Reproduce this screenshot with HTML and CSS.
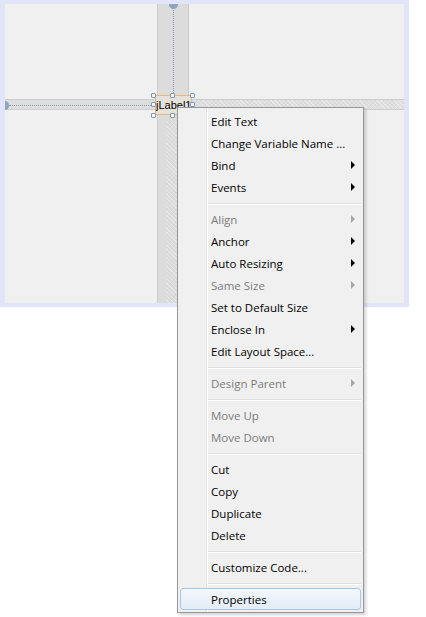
FILE: index.html
```html
<!DOCTYPE html>
<html>
<head>
<meta charset="utf-8">
<link rel="stylesheet" href="styles.css">
</head>
<body>
<div class="stage">
  <div class="frame">
    <div class="canvas">
      <div class="vband">
        <div class="vhatch"></div>
      </div>
      <div class="hband">
        <div class="hhatch"></div>
      </div>
      <div class="vdots"></div>
      <div class="hdots"></div>
      <div class="knob-top"></div>
      <div class="knob-left"></div>
      <div class="label">jLabel1</div>
    </div>
  </div>
  <div class="handle h1"></div>
  <div class="handle h2"></div>
  <div class="handle h3"></div>
  <div class="handle h4"></div>
  <div class="handle h5"></div>
  <div class="handle h6"></div>
  <div class="handle h7"></div>
  <div class="handle h8"></div>

  <div class="menu">
    <div class="item">Edit Text</div>
    <div class="item">Change Variable Name ...</div>
    <div class="item sub">Bind<span class="arrow"></span></div>
    <div class="item sub">Events<span class="arrow"></span></div>
    <div class="sep"></div>
    <div class="item sub dis">Align<span class="arrow"></span></div>
    <div class="item sub">Anchor<span class="arrow"></span></div>
    <div class="item sub">Auto Resizing<span class="arrow"></span></div>
    <div class="item sub dis">Same Size<span class="arrow"></span></div>
    <div class="item">Set to Default Size</div>
    <div class="item sub">Enclose In<span class="arrow"></span></div>
    <div class="item">Edit Layout Space...</div>
    <div class="sep"></div>
    <div class="item sub dis">Design Parent<span class="arrow"></span></div>
    <div class="sep"></div>
    <div class="item dis">Move Up</div>
    <div class="item dis">Move Down</div>
    <div class="sep"></div>
    <div class="item">Cut</div>
    <div class="item">Copy</div>
    <div class="item">Duplicate</div>
    <div class="item">Delete</div>
    <div class="sep"></div>
    <div class="item">Customize Code...</div>
    <div class="sep"></div>
    <div class="item hot">Properties</div>
  </div>
</div>
</body>
</html>
```

FILE: styles.css
```css
html, body {
  margin: 0;
  padding: 0;
  background: #ffffff;
}

.stage {
  position: relative;
  width: 426px;
  height: 617px;
  overflow: hidden;
}

.frame {
  width: 399px;
  height: 299px;
  padding: 4px 5px 4px 5px;
  background: #e2e5f9;
}

.canvas {
  position: relative;
  width: 399px;
  height: 299px;
  background: #f0f0f0;
  overflow: hidden;
}

.vband {
  position: absolute;
  left: 152px;
  top: 0;
  width: 30px;
  height: 299px;
  background: #dcdcdc;
  border-left: 1px solid #cacaca;
  border-right: 1px solid #cacaca;
}

.vhatch {
  position: absolute;
  left: 8px;
  right: 0;
  top: 118px;
  bottom: 0;
  background:
    repeating-linear-gradient(45deg, rgba(255,255,255,0) 0 2px, rgba(255,255,255,0.3) 2px 3px),
    repeating-linear-gradient(-45deg, rgba(0,0,0,0) 0 2px, rgba(0,0,0,0.025) 2px 3px);
}

.hband {
  position: absolute;
  left: 0;
  top: 95px;
  width: 399px;
  height: 9px;
  background: #dedede;
  border-top: 1px solid #cccccc;
  border-bottom: 1px solid #cccccc;
}

.hhatch {
  position: absolute;
  left: 186px;
  right: 0;
  top: 0;
  bottom: 0;
  background:
    repeating-linear-gradient(45deg, rgba(255,255,255,0) 0 2px, rgba(255,255,255,0.3) 2px 3px),
    repeating-linear-gradient(-45deg, rgba(0,0,0,0) 0 2px, rgba(0,0,0,0.025) 2px 3px);
}

.vdots {
  position: absolute;
  left: 168px;
  top: 4px;
  height: 87px;
  border-left: 1px dotted #8398ae;
}

.hdots {
  position: absolute;
  left: 4px;
  top: 101px;
  width: 142px;
  border-top: 1px dotted #8398ae;
}

.knob-top {
  position: absolute;
  left: 164px;
  top: -4px;
  width: 9px;
  height: 9px;
  border-radius: 50%;
  background: #8ea5bd;
}

.knob-left {
  position: absolute;
  left: -4px;
  top: 97px;
  width: 8px;
  height: 9px;
  border-radius: 50%;
  background: #8ea5bd;
}

.label {
  position: absolute;
  left: 150px;
  top: 91px;
  width: 35px;
  height: 18px;
  border: 1px solid #eab87a;
  background: #e6e2da;
  font-family: "Liberation Sans", Arial, sans-serif;
  font-size: 11px;
  line-height: 19px;
  color: #000000;
  white-space: nowrap;
  overflow: visible;
}

.handle {
  position: absolute;
  width: 3px;
  height: 3px;
  border: 1px solid #7f98b0;
  background: #f4f6f8;
  border-radius: 1px;
}
.h1 { left: 151px; top: 93px; }
.h2 { left: 170px; top: 93px; }
.h3 { left: 190px; top: 93px; }
.h4 { left: 151px; top: 102px; }
.h5 { left: 190px; top: 102px; }
.h6 { left: 151px; top: 113px; }
.h7 { left: 170px; top: 113px; }
.h8 { left: 190px; top: 113px; }

.menu {
  position: absolute;
  left: 177px;
  top: 107px;
  width: 181px;
  height: 500px;
  padding: 2px;
  border: 1px solid #979797;
  background:
    linear-gradient(to right, transparent 26px, #e2e3e3 26px, #e2e3e3 27px, #ffffff 27px, #ffffff 28px, transparent 28px),
    #f0f0f0;
  background-origin: content-box;
  background-clip: border-box;
  box-shadow: 2px 2px 3px rgba(0, 0, 0, 0.18);
  font-family: "Open Sans", "Noto Sans", sans-serif;
  font-size: 11.5px;
  color: #000000;
  display: flex;
  flex-direction: column;
}

.item {
  position: relative;
  box-sizing: border-box;
  height: 22px;
  line-height: 22px;
  padding-top: 1px;
  padding-left: 31px;
  padding-right: 3px;
  white-space: nowrap;
  display: flex;
  align-items: center;
  justify-content: space-between;
}

.item.dis {
  color: #7c7c7c;
}

.arrow {
  width: 0;
  height: 0;
  border-top: 4px solid transparent;
  border-bottom: 4px solid transparent;
  border-left: 4px solid #000000;
  margin-right: 3px;
  margin-top: -1px;
}

.dis .arrow {
  border-left-color: #a6a6a6;
}

.sep {
  height: 10px;
  margin-left: 28px;
  background: linear-gradient(to bottom, transparent 5px, #e0e0e0 5px, #e0e0e0 6px, #ffffff 6px, #ffffff 7px, transparent 7px);
}

.item.hot {
  border: 1px solid #a9c6e6;
  border-radius: 3px;
  padding-left: 30px;
  line-height: 20px;
  background: linear-gradient(to bottom, #f3f7fc, #e3ecf7);
}
```
